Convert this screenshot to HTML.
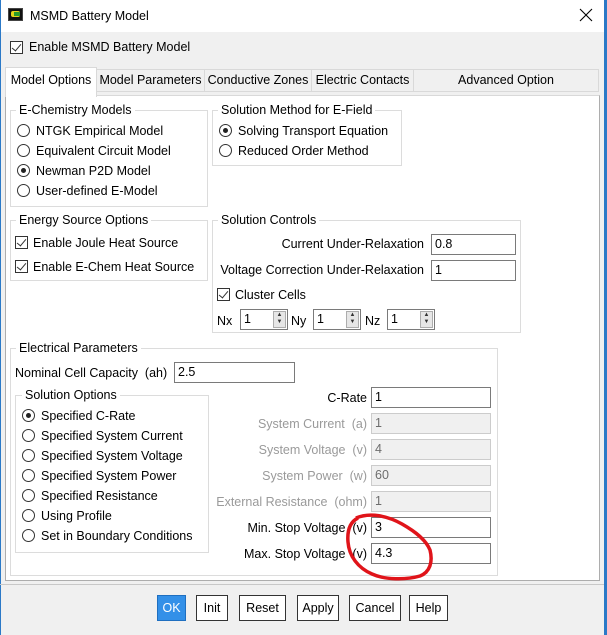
<!DOCTYPE html>
<html><head><meta charset="utf-8"><style>
*{box-sizing:border-box;margin:0;padding:0}
body{width:607px;height:635px;overflow:hidden;background:#f0f0f0;font-family:"Liberation Sans","DejaVu Sans",sans-serif;font-size:12.5px;color:#000;position:relative}
.a{position:absolute;white-space:nowrap;line-height:16px}
.g{position:absolute;border:1px solid #dcdcdc}
.gl{position:absolute;background:#fff;padding:0 3px;line-height:14px}
.r{position:absolute;width:13px;height:13px;border:1px solid #333;border-radius:50%;background:#fff}
.r.on::after{content:"";position:absolute;left:3px;top:3px;width:5px;height:5px;border-radius:50%;background:#222}
.c{position:absolute;width:13px;height:13px;border:1px solid #333;background:#fff}
.c::after{content:"";position:absolute;left:3px;top:0px;width:4px;height:8px;border:solid #333;border-width:0 1.5px 1.5px 0;transform:rotate(40deg)}
.i{position:absolute;border:1px solid #7a7a7a;background:#fff;height:21px;padding-left:3px;line-height:19px}
.i.d{border-color:#ccc;background:#f0f0f0;color:#6d6d6d}
.lb{position:absolute;text-align:right;line-height:16px;white-space:nowrap}
.gr{color:#9a9a9a}
.t{position:absolute;top:69px;height:23px;border:1px solid #d9d9d9;background:#f0f0f0;line-height:21px;text-align:center}
.b{position:absolute;top:595px;height:26px;border:1px solid #333;background:#fff;line-height:24px;text-align:center}
.sp{position:absolute;right:1px;top:1px;width:13px;height:17px;background:#e6e6e6;border:1px solid #adadad;font-size:6px;line-height:7px;text-align:center;color:#333}
</style></head><body>
<div style="position:absolute;left:0;top:0;width:1px;height:635px;background:#2b79c7"></div>
<div style="position:absolute;left:604px;top:0;width:3px;height:635px;background:#2b79c7"></div>
<div style="position:absolute;left:1px;top:0;width:603px;height:32px;background:#fff"></div>
<div style="position:absolute;left:8px;top:8px;width:15px;height:13px;background:#111;border:1px solid #444"><div style="position:absolute;left:2px;top:2px;width:9px;height:6px;background:#e5d61a;border-radius:2px"></div><div style="position:absolute;left:5px;top:3px;width:6px;height:4px;background:#2b9b2b"></div></div>
<div class="a" style="left:30px;top:8px">MSMD Battery Model</div>
<svg style="position:absolute;left:579px;top:8px" width="14" height="14"><path d="M1 1L13 13M13 1L1 13" stroke="#000" stroke-width="1.1"/></svg>
<div class="c" style="left:10px;top:41px"></div>
<div class="a" style="left:29px;top:39px">Enable MSMD Battery Model</div>
<div class="t" style="left:96px;width:109px">Model Parameters</div>
<div class="t" style="left:204px;width:108px">Conductive Zones</div>
<div class="t" style="left:311px;width:103px">Electric Contacts</div>
<div class="t" style="left:413px;width:186px">Advanced Option</div>
<div style="position:absolute;left:5px;top:95px;width:595px;height:486px;background:#fff;border:1px solid #adadad;border-top-color:#d9d9d9"></div>
<div style="position:absolute;left:5px;top:67px;width:92px;height:30px;background:#fff;border:1px solid #d9d9d9;border-bottom:none;text-align:center;line-height:24px">Model Options</div>
<div style="position:absolute;left:0;top:584px;width:604px;height:1px;background:#c8c8c8"></div>

<div class="g" style="left:10px;top:110px;width:198px;height:97px"></div><div class="gl" style="left:16px;top:103px">E-Chemistry Models</div>
<div class="r" style="left:17px;top:124px"></div><div class="a" style="left:36px;top:123px">NTGK Empirical Model</div>
<div class="r" style="left:17px;top:144px"></div><div class="a" style="left:36px;top:143px">Equivalent Circuit Model</div>
<div class="r on" style="left:17px;top:164px"></div><div class="a" style="left:36px;top:163px">Newman P2D Model</div>
<div class="r" style="left:17px;top:184px"></div><div class="a" style="left:36px;top:183px">User-defined E-Model</div>

<div class="g" style="left:212px;top:110px;width:190px;height:56px"></div><div class="gl" style="left:218px;top:103px">Solution Method for E-Field</div>
<div class="r on" style="left:219px;top:124px"></div><div class="a" style="left:238px;top:123px">Solving Transport Equation</div>
<div class="r" style="left:219px;top:144px"></div><div class="a" style="left:238px;top:143px">Reduced Order Method</div>

<div class="g" style="left:10px;top:220px;width:198px;height:61px"></div><div class="gl" style="left:16px;top:213px">Energy Source Options</div>
<div class="c" style="left:15px;top:236px"></div><div class="a" style="left:33px;top:235px">Enable Joule Heat Source</div>
<div class="c" style="left:15px;top:260px"></div><div class="a" style="left:33px;top:259px">Enable E-Chem Heat Source</div>

<div class="g" style="left:212px;top:220px;width:309px;height:113px"></div><div class="gl" style="left:218px;top:213px">Solution Controls</div>
<div class="lb" style="left:212px;width:212px;top:236px">Current Under-Relaxation</div><div class="i" style="left:431px;top:234px;width:85px">0.8</div>
<div class="lb" style="left:212px;width:212px;top:262px">Voltage Correction Under-Relaxation</div><div class="i" style="left:431px;top:260px;width:85px">1</div>
<div class="c" style="left:217px;top:288px"></div><div class="a" style="left:235px;top:287px">Cluster Cells</div>
<div class="a" style="left:217px;top:313px">Nx</div><div class="i" style="left:240px;top:309px;width:48px">1<div class="sp">▲<br>▼</div></div>
<div class="a" style="left:291px;top:313px">Ny</div><div class="i" style="left:313px;top:309px;width:48px">1<div class="sp">▲<br>▼</div></div>
<div class="a" style="left:365px;top:313px">Nz</div><div class="i" style="left:387px;top:309px;width:48px">1<div class="sp">▲<br>▼</div></div>

<div class="g" style="left:10px;top:348px;width:488px;height:228px"></div><div class="gl" style="left:16px;top:341px">Electrical Parameters</div>
<div class="a" style="left:15px;top:365px">Nominal Cell Capacity&nbsp; (ah)</div><div class="i" style="left:174px;top:362px;width:121px">2.5</div>
<div class="g" style="left:15px;top:395px;width:194px;height:158px"></div><div class="gl" style="left:22px;top:388px">Solution Options</div>
<div class="r on" style="left:22px;top:409px"></div><div class="a" style="left:41px;top:408px">Specified C-Rate</div>
<div class="r" style="left:22px;top:429px"></div><div class="a" style="left:41px;top:428px">Specified System Current</div>
<div class="r" style="left:22px;top:449px"></div><div class="a" style="left:41px;top:448px">Specified System Voltage</div>
<div class="r" style="left:22px;top:469px"></div><div class="a" style="left:41px;top:468px">Specified System Power</div>
<div class="r" style="left:22px;top:489px"></div><div class="a" style="left:41px;top:488px">Specified Resistance</div>
<div class="r" style="left:22px;top:509px"></div><div class="a" style="left:41px;top:508px">Using Profile</div>
<div class="r" style="left:22px;top:529px"></div><div class="a" style="left:41px;top:528px">Set in Boundary Conditions</div>

<div class="lb" style="left:200px;width:167px;top:390px">C-Rate</div><div class="i" style="left:371px;top:387px;width:120px">1</div>
<div class="lb gr" style="left:200px;width:167px;top:416px">System Current&nbsp; (a)</div><div class="i d" style="left:371px;top:413px;width:120px">1</div>
<div class="lb gr" style="left:200px;width:167px;top:442px">System Voltage&nbsp; (v)</div><div class="i d" style="left:371px;top:439px;width:120px">4</div>
<div class="lb gr" style="left:200px;width:167px;top:468px">System Power&nbsp; (w)</div><div class="i d" style="left:371px;top:465px;width:120px">60</div>
<div class="lb gr" style="left:200px;width:167px;top:494px">External Resistance&nbsp; (ohm)</div><div class="i d" style="left:371px;top:491px;width:120px">1</div>
<div class="lb" style="left:200px;width:167px;top:520px">Min. Stop Voltage&nbsp; (v)</div><div class="i" style="left:371px;top:517px;width:120px">3</div>
<div class="lb" style="left:200px;width:167px;top:546px">Max. Stop Voltage&nbsp; (v)</div><div class="i" style="left:371px;top:543px;width:120px">4.3</div>

<svg style="position:absolute;left:340px;top:510px" width="100" height="75"><path d="M16 8 C30 2 48 6 62 14 C76 22 86 30 90 40 C93 52 90 62 80 66 C66 70 45 70 32 64 C18 58 9 46 8 32 C7 20 10 12 18 8" fill="none" stroke="#e0141a" stroke-width="3.5"/></svg>

<div class="b" style="left:157px;width:29px;background:#3390e8;border-color:#1f6fc0;color:#fff">OK</div>
<div class="b" style="left:196px;width:32px">Init</div>
<div class="b" style="left:239px;width:47px">Reset</div>
<div class="b" style="left:297px;width:42px">Apply</div>
<div class="b" style="left:349px;width:52px">Cancel</div>
<div class="b" style="left:409px;width:39px">Help</div>
</body></html>
